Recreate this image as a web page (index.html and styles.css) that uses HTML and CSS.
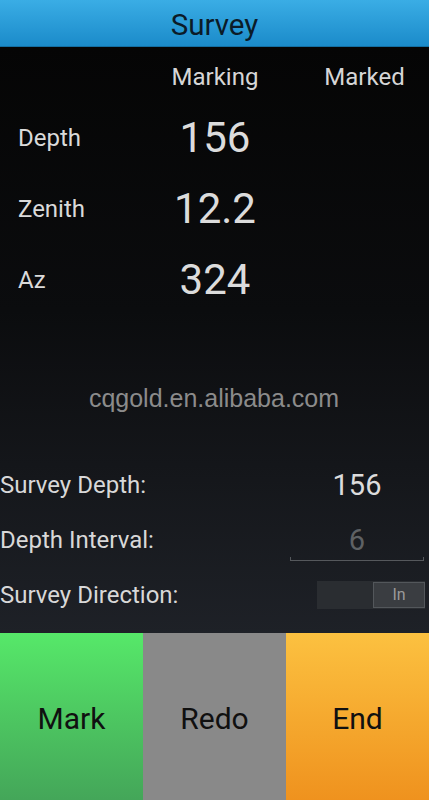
FILE: index.html
```html
<!DOCTYPE html>
<html>
<head>
<meta charset="utf-8">
<link rel="stylesheet" href="styles.css">
</head>
<body>
<div class="app">
  <header class="titlebar">Survey</header>
  <main class="content">
    <div class="readings">
      <div class="cell"></div>
      <div class="cell colhead">Marking</div>
      <div class="cell colhead marked">Marked</div>

      <div class="cell label">Depth</div>
      <div class="cell value">156</div>
      <div class="cell marked"></div>

      <div class="cell label">Zenith</div>
      <div class="cell value">12.2</div>
      <div class="cell marked"></div>

      <div class="cell label">Az</div>
      <div class="cell value">324</div>
      <div class="cell marked"></div>
    </div>

    <div class="watermark">cqgold.en.alibaba.com</div>

    <div class="form">
      <div class="frow">
        <div class="flabel">Survey Depth:</div>
        <div class="fvalue">156</div>
      </div>
      <div class="frow">
        <div class="flabel">Depth Interval:</div>
        <div class="finput">
          <div class="finput-text">6</div>
          <div class="finput-line"></div>
        </div>
      </div>
      <div class="frow">
        <div class="flabel">Survey Direction:</div>
        <div class="fswitch">
          <div class="toggle">
            <div class="toggle-thumb">In</div>
          </div>
        </div>
      </div>
    </div>
  </main>
  <footer class="actions">
    <div class="btn btn-mark">Mark</div>
    <div class="btn btn-redo">Redo</div>
    <div class="btn btn-end">End</div>
  </footer>
</div>
</body>
</html>
```

FILE: styles.css
```css
* { box-sizing: border-box; }
html, body { margin: 0; padding: 0; }
body {
  width: 429px;
  height: 800px;
  overflow: hidden;
  font-family: Roboto, "Noto Sans", sans-serif;
  background: #000;
}
.app {
  width: 429px;
  height: 800px;
  display: flex;
  flex-direction: column;
}
.titlebar {
  height: 47px;
  flex: none;
  background: linear-gradient(#3aade5, #1b8bca);
  border-bottom: 1px solid #146fa2;
  color: #0b1b28;
  font-size: 29.5px;
  line-height: 50px;
  text-align: center;
}
.content {
  flex: 1;
  display: flex;
  flex-direction: column;
  background: linear-gradient(#050505 0%, #0b0c0e 45%, #1e2127 100%);
  color: #dadada;
}
.readings {
  display: grid;
  grid-template-columns: 143px 144px 1fr;
  grid-template-rows: 55px 71px 71px 71px;
}
.cell {
  display: flex;
  align-items: center;
}
.colhead {
  justify-content: center;
  font-size: 24px;
  padding-top: 4px;
  color: #d6d6d6;
}
.marked {
  justify-content: center;
  padding-left: 13px;
}
.label {
  padding-left: 18px;
  font-size: 24px;
}
.value {
  justify-content: center;
  font-size: 42px;
  color: #dcdcdc;
}
.watermark {
  margin-top: 68px;
  height: 30px;
  line-height: 30px;
  text-align: center;
  font-family: "Liberation Sans", Arial, sans-serif;
  font-size: 25px;
  color: #8b8b8b;
  padding-right: 1px;
}
.form {
  margin-top: 44px;
  display: flex;
  flex-direction: column;
}
.frow {
  height: 55px;
  display: grid;
  grid-template-columns: 1fr 134px;
  padding-right: 5px;
  align-items: center;
}
.flabel {
  font-size: 24px;
  color: #d8d8d8;
}
.fvalue {
  text-align: center;
  font-size: 29px;
  color: #dcdcdc;
}
.finput {
  display: flex;
  flex-direction: column;
  padding-top: 4px;
}
.finput-text {
  text-align: center;
  font-size: 29px;
  line-height: 34px;
  color: #5e6164;
}
.finput-line {
  height: 4px;
  border: 1px solid #55585c;
  border-top: none;
}
.fswitch {
  display: flex;
  justify-content: flex-end;
  margin-right: -1px;
}
.toggle {
  width: 108px;
  height: 28px;
  background: #2a2d31;
  display: flex;
  justify-content: flex-end;
  align-items: center;
  padding: 1px 0;
}
.toggle-thumb {
  width: 52px;
  height: 26px;
  background: #3a3d41;
  border: 1px solid #53575b;
  color: #9a9a9a;
  font-size: 16px;
  line-height: 24px;
  text-align: center;
}
.actions {
  height: 167px;
  flex: none;
  display: grid;
  grid-template-columns: 143px 143px 143px;
}
.btn {
  display: flex;
  align-items: center;
  justify-content: center;
  font-size: 30px;
  color: #101010;
  padding-top: 3px;
}
.btn-mark {
  background: linear-gradient(#56e869, #44a659);
}
.btn-redo {
  background: #898989;
}
.btn-end {
  background: linear-gradient(#fcc140, #ef921e);
}
```
